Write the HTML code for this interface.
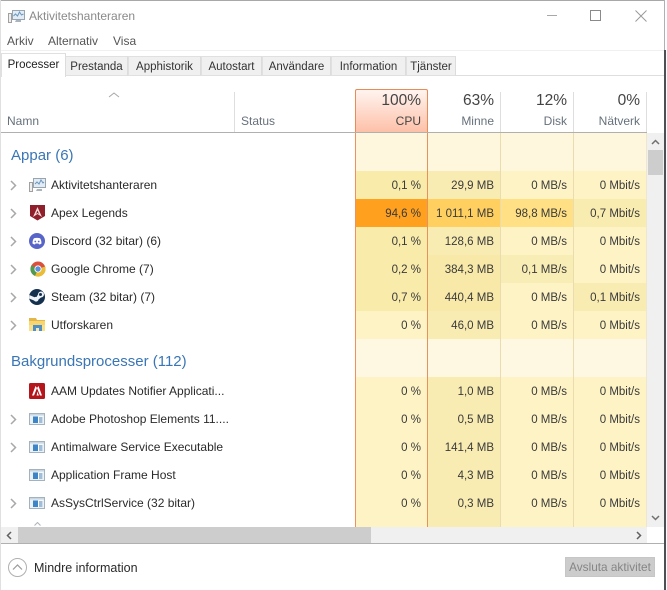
<!DOCTYPE html>
<html lang="sv"><head><meta charset="utf-8"><title>Aktivitetshanteraren</title>
<style>
html,body{margin:0;padding:0;background:#fff}
body{width:667px;height:590px;position:relative;overflow:hidden;font-family:"Liberation Sans",sans-serif;font-size:12px;color:#222}
div,svg,span{position:absolute;box-sizing:border-box}
.tab{top:56px;height:20px;background:#f0f0f0;border:1px solid #e0e0e0;border-right:1px solid #dcdcdc;line-height:20px;text-align:center;color:#333;font-size:11.500px}
.menu{top:34px;color:#555;line-height:14px;font-size:12px}
.hd{text-align:right;width:66px;color:#66717b;font-size:12px;line-height:14px;top:114px}
.pc{text-align:right;width:66px;color:#444;font-size:15.500px;line-height:18px;top:92px}
.sep{top:92px;width:1px;height:40px;background:#dedede}
.row{left:2px;width:645px;height:28px}
.n{left:49px;top:0;line-height:28px;white-space:nowrap;color:#2a2a2a;font-size:12px}
.c{top:0;height:28px;line-height:30px;text-align:right;padding-right:6px;white-space:nowrap;color:#3a3a3a;font-size:11.500px;overflow:hidden}
.c1{left:353px;width:72px}.c2{left:425px;width:73px}.c3{left:498px;width:73px}.c4{left:571px;width:73px}
.ch{left:8px;top:9px}
.ic{left:27px;top:6px}
.gi{left:27px;top:8px}
.grp{left:11px;color:#3a76b5;font-size:15px;line-height:20px;white-space:nowrap;top:0}
</style></head><body>

<div style="left:0;top:0;width:665px;height:1px;background:#a8a8a8"></div>
<div style="left:664px;top:0;width:1px;height:50px;background:#b0b0b0"></div>
<div style="left:664px;top:50px;width:2px;height:540px;background:#4a5054"></div>
<div style="left:0;top:0;width:1px;height:590px;background:#e0e0e0"></div>

<svg style="left:8px;top:9px" width="17" height="15" viewBox="0 0 17 15"><rect x="4.500" y="1.500" width="12" height="9" fill="#e3ecf4" stroke="#98a4af"/><path d="M5.500 7l2-2 2 2 2-4 2 3 2-1" fill="none" stroke="#6a97bf"/><path d="M8 11h5v2H7z" fill="#aab4bd"/><rect x=".5" y="4.500" width="3" height="9" fill="#efefef" stroke="#a0a0a0"/></svg>
<div style="left:29px;top:9px;color:#8a8a8a;font-size:12px;line-height:14px">Aktivitetshanteraren</div>
<div style="left:547px;top:15px;width:10px;height:1px;background:#a8a8a8"></div>
<div style="left:590px;top:10px;width:11px;height:11px;border:1px solid #8a8a8a"></div>
<svg style="left:635px;top:10px" width="12" height="12" viewBox="0 0 12 12"><path d="M.5.5l11 11M11.500.5l-11 11" stroke="#9a9a9a" fill="none"/></svg>

<div class="menu" style="left:7px">Arkiv</div>
<div class="menu" style="left:48px">Alternativ</div>
<div class="menu" style="left:113px">Visa</div>
<div style="left:1px;top:50px;width:663px;height:1px;background:#f0f0f0"></div>

<div style="left:1px;top:75px;width:663px;height:1px;background:#dedede"></div>
<div class="tab" style="left:65px;width:63px">Prestanda</div>
<div class="tab" style="left:128px;width:73px">Apphistorik</div>
<div class="tab" style="left:201px;width:61px">Autostart</div>
<div class="tab" style="left:262px;width:69px">Användare</div>
<div class="tab" style="left:331px;width:75px">Information</div>
<div class="tab" style="left:406px;width:50px">Tjänster</div>
<div class="tab" style="left:1px;top:53px;width:65px;height:24px;background:#fff;border-bottom:0;line-height:22px;color:#222;font-size:11.500px">Processer</div>

<svg style="left:108px;top:91px" width="12" height="7" viewBox="0 0 12 7"><path d="M1 6l5-4 5 4" fill="none" stroke="#a8a8a8"/></svg>
<div style="left:7px;top:114px;color:#66717b;line-height:14px">Namn</div>
<div style="left:241px;top:114px;color:#66717b;line-height:14px">Status</div>
<div class="sep" style="left:234px"></div>
<div class="sep" style="left:500px"></div>
<div class="sep" style="left:573px"></div>
<div class="sep" style="left:646px"></div>
<div style="left:355px;top:89px;width:73px;height:44px;background:linear-gradient(#fff4f0,#fdbfa6);border:1px solid #ea8a54;border-bottom:0;border-radius:2px 2px 0 0"></div>
<div class="pc" style="left:355px">100%</div>
<div class="hd" style="left:355px;color:#444">CPU</div>
<div class="pc" style="left:428px">63%</div>
<div class="hd" style="left:428px">Minne</div>
<div class="pc" style="left:501px">12%</div>
<div class="hd" style="left:501px">Disk</div>
<div class="pc" style="left:574px">0%</div>
<div class="hd" style="left:574px">Nätverk</div>
<div style="left:1px;top:132px;width:646px;height:1px;background:#b0b0b0"></div>

<!-- group bg -->
<div style="left:355px;top:133px;width:291px;height:38px;background:#fef7dd"></div>
<div style="left:355px;top:339px;width:291px;height:38px;background:#fef8e2"></div>
<div class="grp" style="top:146px">Appar (6)</div>
<div class="grp" style="top:352px">Bakgrundsprocesser (112)</div>

<!-- rows -->
<div class="row" style="top:171px">
<svg class="ch" width="7" height="11" viewBox="0 0 7 11"><path d="M1 1l4.500 4.500L1 10" fill="none" stroke="#a8a8a8" stroke-width="1.500"/></svg>
<svg class="ic" width="17" height="16" viewBox="0 0 17 16"><rect x="4.500" y="1.500" width="12" height="9" fill="#e3ecf4" stroke="#98a4af"/><path d="M6 7l2-2 2 2 2-4 2 3 1-1" fill="none" stroke="#6a97bf"/><path d="M8 12h5v2H7z" fill="#aab4bd"/><rect x=".5" y="5.500" width="3" height="9" fill="#efefef" stroke="#a0a0a0"/></svg>
<div class="n">Aktivitetshanteraren</div>
<div class="c c1" style="background:#f9ebaa">0,1 %</div><div class="c c2" style="background:#f9ecb2">29,9 MB</div><div class="c c3" style="background:#fef3c4">0 MB/s</div><div class="c c4" style="background:#fef3c4">0 Mbit/s</div></div>

<div class="row" style="top:199px">
<svg class="ch" width="7" height="11" viewBox="0 0 7 11"><path d="M1 1l4.500 4.500L1 10" fill="none" stroke="#a8a8a8" stroke-width="1.500"/></svg>
<svg class="ic" width="15" height="17" viewBox="0 0 15 17" style="left:28px;top:5px"><path d="M0 1h15v11l-7.500 4.500L0 12z" fill="#8e1f2b"/><path d="M7.500 3L3 13l4.500-3 4.500 3z" fill="#f4d9d6"/><path d="M7.500 6.500L6 10l1.500-1 1.500 1z" fill="#8e1f2b"/></svg>
<div class="n">Apex Legends</div>
<div class="c c1" style="background:#ffa01e">94,6 %</div><div class="c c2" style="background:#ffd060">1 011,1 MB</div><div class="c c3" style="background:#ffe084">98,8 MB/s</div><div class="c c4" style="background:#f9ecb0">0,7 Mbit/s</div></div>

<div class="row" style="top:227px">
<svg class="ch" width="7" height="11" viewBox="0 0 7 11"><path d="M1 1l4.500 4.500L1 10" fill="none" stroke="#a8a8a8" stroke-width="1.500"/></svg>
<svg class="ic" width="16" height="16" viewBox="0 0 16 16"><circle cx="8" cy="8" r="8" fill="#5865c8"/><path d="M3.500 10.500C3.500 8 4.300 6 5 5.300 6.500 4.700 9.500 4.700 11 5.300c.7.700 1.500 2.700 1.500 5.200-1 .7-2 1-2.500.9L9.500 10.500h-3L6 11.400c-.5.100-1.500-.2-2.500-.9z" fill="#fff"/><circle cx="6.300" cy="8.500" r=".9" fill="#5865c8"/><circle cx="9.700" cy="8.500" r=".9" fill="#5865c8"/></svg>
<div class="n">Discord (32 bitar) (6)</div>
<div class="c c1" style="background:#f9ebaa">0,1 %</div><div class="c c2" style="background:#f9ecb2">128,6 MB</div><div class="c c3" style="background:#fef3c4">0 MB/s</div><div class="c c4" style="background:#fef3c4">0 Mbit/s</div></div>

<div class="row" style="top:255px">
<svg class="ch" width="7" height="11" viewBox="0 0 7 11"><path d="M1 1l4.500 4.500L1 10" fill="none" stroke="#a8a8a8" stroke-width="1.500"/></svg>
<svg class="ic" width="16" height="16" viewBox="0 0 16 16" style="left:28px"><circle cx="8" cy="8" r="7.500" fill="#d9503f"/><path d="M8 8L1.500 4.200A7.500 7.500 0 0 0 5 15z" fill="#4f9a4e"/><path d="M8 8l7-2.500A7.500 7.500 0 0 1 5 15z" fill="#e9bd35"/><circle cx="8" cy="8" r="3.600" fill="#fff"/><circle cx="8" cy="8" r="2.700" fill="#5a8fdc"/></svg>
<div class="n">Google Chrome (7)</div>
<div class="c c1" style="background:#f9ebaa">0,2 %</div><div class="c c2" style="background:#f8e9a8">384,3 MB</div><div class="c c3" style="background:#f9edb6">0,1 MB/s</div><div class="c c4" style="background:#fef3c4">0 Mbit/s</div></div>

<div class="row" style="top:283px">
<svg class="ch" width="7" height="11" viewBox="0 0 7 11"><path d="M1 1l4.500 4.500L1 10" fill="none" stroke="#a8a8a8" stroke-width="1.500"/></svg>
<svg class="ic" width="16" height="16" viewBox="0 0 16 16"><circle cx="8" cy="8" r="8" fill="#14304f"/><path d="M0 9.500l5 2a2.500 2.500 0 0 0 4.500-1L12 8.500a3 3 0 1 0-3-3L7.500 8a2.500 2.500 0 0 0-2 .3L.3 6z" fill="#eef3f7"/><circle cx="11.500" cy="5.500" r="1.500" fill="#14304f"/></svg>
<div class="n">Steam (32 bitar) (7)</div>
<div class="c c1" style="background:#f9ebaa">0,7 %</div><div class="c c2" style="background:#f8e9a8">440,4 MB</div><div class="c c3" style="background:#fef3c4">0 MB/s</div><div class="c c4" style="background:#f9ecb2">0,1 Mbit/s</div></div>

<div class="row" style="top:311px">
<svg class="ch" width="7" height="11" viewBox="0 0 7 11"><path d="M1 1l4.500 4.500L1 10" fill="none" stroke="#a8a8a8" stroke-width="1.500"/></svg>
<svg class="ic" width="17" height="15" viewBox="0 0 17 15"><path d="M0 1h7l1 2h8v2H0z" fill="#e3b64a"/><path d="M0 4h16v10H0z" fill="#f8d56e"/><path d="M0 8h16v6H0z" fill="#fbe08a"/><rect x="4" y="8" width="9" height="6" fill="#4d8fc9"/><rect x="7" y="11" width="3" height="3" fill="#fbe9b0"/></svg>
<div class="n">Utforskaren</div>
<div class="c c1" style="background:#fef3c4">0 %</div><div class="c c2" style="background:#f9ecb2">46,0 MB</div><div class="c c3" style="background:#fef3c4">0 MB/s</div><div class="c c4" style="background:#fef3c4">0 Mbit/s</div></div>

<div class="row" style="top:377px">
<svg class="ic" width="16" height="16" viewBox="0 0 16 16" style="left:27px"><rect width="16" height="16" rx="1.500" fill="#b5161c"/><path d="M6.500 3L3 12.500h2L8 5zM9.500 3L13 12.500h-2L8 5zM8 8.500l2 4H7.500L8 11z" fill="#fff"/></svg>
<div class="n">AAM Updates Notifier Applicati...</div>
<div class="c c1" style="background:#fef3c4">0 %</div><div class="c c2" style="background:#f9ecb2">1,0 MB</div><div class="c c3" style="background:#fef3c4">0 MB/s</div><div class="c c4" style="background:#fef3c4">0 Mbit/s</div></div>

<div class="row" style="top:405px">
<svg class="ch" width="7" height="11" viewBox="0 0 7 11"><path d="M1 1l4.500 4.500L1 10" fill="none" stroke="#a8a8a8" stroke-width="1.500"/></svg>
<svg class="gi" width="16" height="12" viewBox="0 0 16 12"><rect x=".5" y=".5" width="15" height="11" fill="#eaf1f7" stroke="#a4b2be"/><rect x="1" y="1" width="14" height="1.500" fill="#c9d6e1"/><rect x="4" y="3.500" width="5" height="6.500" fill="#3d85c6"/><rect x="9" y="3.500" width="5" height="6.500" fill="#fff"/><path d="M10 5h3.500M10 7h3.500M10 9h3.500" stroke="#3d7db5" stroke-width="1"/></svg>
<div class="n">Adobe Photoshop Elements 11....</div>
<div class="c c1" style="background:#fef3c4">0 %</div><div class="c c2" style="background:#f9ecb2">0,5 MB</div><div class="c c3" style="background:#fef3c4">0 MB/s</div><div class="c c4" style="background:#fef3c4">0 Mbit/s</div></div>

<div class="row" style="top:433px">
<svg class="ch" width="7" height="11" viewBox="0 0 7 11"><path d="M1 1l4.500 4.500L1 10" fill="none" stroke="#a8a8a8" stroke-width="1.500"/></svg>
<svg class="gi" width="16" height="12" viewBox="0 0 16 12"><rect x=".5" y=".5" width="15" height="11" fill="#eaf1f7" stroke="#a4b2be"/><rect x="1" y="1" width="14" height="1.500" fill="#c9d6e1"/><rect x="4" y="3.500" width="5" height="6.500" fill="#3d85c6"/><rect x="9" y="3.500" width="5" height="6.500" fill="#fff"/><path d="M10 5h3.500M10 7h3.500M10 9h3.500" stroke="#3d7db5" stroke-width="1"/></svg>
<div class="n">Antimalware Service Executable</div>
<div class="c c1" style="background:#fef3c4">0 %</div><div class="c c2" style="background:#f9ecb2">141,4 MB</div><div class="c c3" style="background:#fef3c4">0 MB/s</div><div class="c c4" style="background:#fef3c4">0 Mbit/s</div></div>

<div class="row" style="top:461px">
<svg class="gi" width="16" height="12" viewBox="0 0 16 12"><rect x=".5" y=".5" width="15" height="11" fill="#eaf1f7" stroke="#a4b2be"/><rect x="1" y="1" width="14" height="1.500" fill="#c9d6e1"/><rect x="4" y="3.500" width="5" height="6.500" fill="#3d85c6"/><rect x="9" y="3.500" width="5" height="6.500" fill="#fff"/><path d="M10 5h3.500M10 7h3.500M10 9h3.500" stroke="#3d7db5" stroke-width="1"/></svg>
<div class="n">Application Frame Host</div>
<div class="c c1" style="background:#fef3c4">0 %</div><div class="c c2" style="background:#f9ecb2">4,3 MB</div><div class="c c3" style="background:#fef3c4">0 MB/s</div><div class="c c4" style="background:#fef3c4">0 Mbit/s</div></div>

<div class="row" style="top:489px">
<svg class="ch" width="7" height="11" viewBox="0 0 7 11"><path d="M1 1l4.500 4.500L1 10" fill="none" stroke="#a8a8a8" stroke-width="1.500"/></svg>
<svg class="gi" width="16" height="12" viewBox="0 0 16 12"><rect x=".5" y=".5" width="15" height="11" fill="#eaf1f7" stroke="#a4b2be"/><rect x="1" y="1" width="14" height="1.500" fill="#c9d6e1"/><rect x="4" y="3.500" width="5" height="6.500" fill="#3d85c6"/><rect x="9" y="3.500" width="5" height="6.500" fill="#fff"/><path d="M10 5h3.500M10 7h3.500M10 9h3.500" stroke="#3d7db5" stroke-width="1"/></svg>
<div class="n">AsSysCtrlService (32 bitar)</div>
<div class="c c1" style="background:#fef3c4">0 %</div><div class="c c2" style="background:#f9ecb2">0,3 MB</div><div class="c c3" style="background:#fef3c4">0 MB/s</div><div class="c c4" style="background:#fef3c4">0 Mbit/s</div></div>

<div class="row" style="top:517px;height:10px;overflow:hidden">
<div class="c c1" style="background:#fef3c4"></div><div class="c c2" style="background:#f9ecb2"></div><div class="c c3" style="background:#fef3c4"></div><div class="c c4" style="background:#fef3c4"></div></div>
<svg style="left:34px;top:522px" width="7" height="4" viewBox="0 0 7 4"><path d="M.5 3.500L3.500.5l3 3" fill="none" stroke="#a9b4bd"/></svg>

<!-- column lines -->
<div style="left:355px;top:133px;width:1px;height:394px;background:#f0905a"></div>
<div style="left:427px;top:133px;width:1px;height:394px;background:#e4935c"></div>
<div style="left:500px;top:133px;width:1px;height:394px;background:#eadcae"></div>
<div style="left:573px;top:133px;width:1px;height:394px;background:#eadcae"></div>
<div style="left:646px;top:133px;width:1px;height:394px;background:#efe7cc"></div>

<!-- vertical scrollbar -->
<div style="left:647px;top:133px;width:17px;height:394px;background:#f0f0f0"></div>
<div style="left:648px;top:150px;width:15px;height:25px;background:#cdcdcd"></div>
<svg style="left:651px;top:139px" width="9" height="6" viewBox="0 0 9 6"><path d="M1 5l3.500-3.500L8 5" fill="none" stroke="#707070" stroke-width="1.500"/></svg>
<svg style="left:651px;top:515px" width="9" height="6" viewBox="0 0 9 6"><path d="M1 1l3.500 3.500L8 1" fill="none" stroke="#707070" stroke-width="1.500"/></svg>

<!-- horizontal scrollbar -->
<div style="left:1px;top:527px;width:646px;height:16px;background:#f0f0f0"></div>
<div style="left:18px;top:527px;width:353px;height:16px;background:#cdcdcd"></div>
<svg style="left:6px;top:531px" width="6" height="9" viewBox="0 0 6 9"><path d="M5 1L1.500 4.500 5 8" fill="none" stroke="#606060" stroke-width="1.500"/></svg>
<svg style="left:636px;top:531px" width="6" height="9" viewBox="0 0 6 9"><path d="M1 1l3.500 3.500L1 8" fill="none" stroke="#606060" stroke-width="1.500"/></svg>
<div style="left:1px;top:543px;width:663px;height:1px;background:#b0b0b0"></div>

<!-- footer -->
<svg style="left:8px;top:558px" width="19" height="19" viewBox="0 0 19 19"><circle cx="9.500" cy="9.500" r="9" fill="#fff" stroke="#b0b0b0"/><path d="M5 11.500l4.500-4.500 4.500 4.500" fill="none" stroke="#9a9a9a" stroke-width="1.200"/></svg>
<div style="left:34px;top:561px;line-height:15px;font-size:12.500px;color:#2a2a2a">Mindre information</div>
<div style="left:565px;top:557px;width:90px;height:20px;background:#cccccc;border:1px solid #c6c6c6;text-align:center;line-height:19px;color:#858585;font-size:11.800px;white-space:nowrap">Avsluta aktivitet</div>
</body></html>
